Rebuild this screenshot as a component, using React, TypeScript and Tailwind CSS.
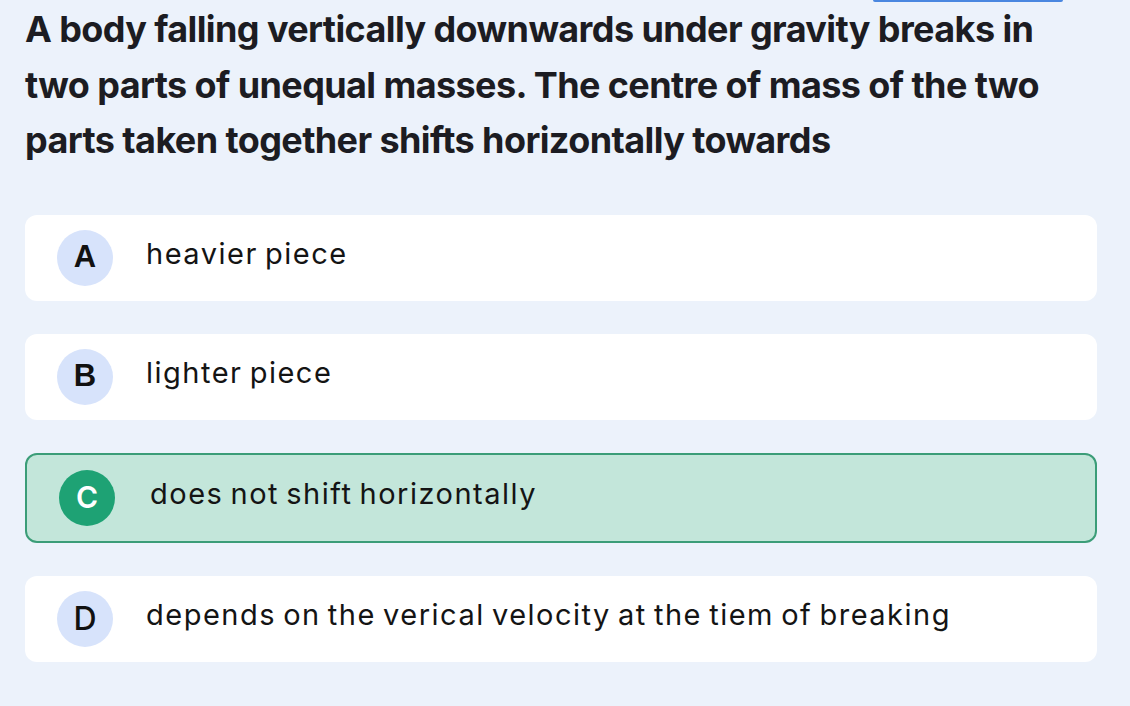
import React from "react";

interface OptionProps {
  letter: string;
  text: string;
  correct?: boolean;
  badgeFont: string;
}

const Option = ({ letter, text, correct, badgeFont }: OptionProps) => {
  const box = correct
    ? "h-[90px] border-2 border-[#3b9d78] bg-[#c3e6da] pl-[32px]"
    : "h-[86px] bg-white pl-[32px]";
  const badge = correct ? "bg-[#1ea274] text-white" : "bg-[#d7e3fb] text-[#111]";
  return (
    <div className={`flex items-center rounded-[12px] ${box}`}>
      <div className={`flex h-[56px] w-[56px] shrink-0 items-center justify-center rounded-full ${badge} ${badgeFont}`}>
        {letter}
      </div>
      <span
        className={`mb-2 text-[29px] leading-[29px] tracking-[1.5px] [word-spacing:-2.5px] text-[#141414] ${
          correct ? "ml-[35px]" : "ml-[33px]"
        }`}
      >
        {text}
      </span>
    </div>
  );
};

const options = [
  { letter: "A", text: "heavier piece", badgeFont: "font-['Liberation_Sans'] text-[31px] font-bold" },
  { letter: "B", text: "lighter piece", badgeFont: "font-['Liberation_Sans'] text-[31px] font-bold" },
  {
    letter: "C",
    text: "does not shift horizontally",
    correct: true,
    badgeFont: "font-['Inter'] text-[30px] font-semibold",
  },
  {
    letter: "D",
    text: "depends on the verical velocity at the tiem of breaking",
    badgeFont: "font-['Inter'] text-[32px] font-medium",
  },
];

export default function App() {
  return (
    <div className="h-[706px] w-[1130px] overflow-hidden bg-[#ecf2fb] font-['Inter',sans-serif]">
      <div className="ml-[873px] h-[2px] w-[190px] rounded-b-full bg-[#4a87e0]" />
      <div className="pl-[25px] pr-[33px]">
        <h1 className="text-[36px] font-bold leading-[55.5px] tracking-[-0.6px] text-[#1c1c22]">
          A body falling vertically downwards under gravity breaks in two parts of unequal masses. The centre of
          mass of the two parts taken together shifts horizontally towards
        </h1>
        <div className="mt-[46px] flex flex-col gap-[33px]">
          {options.map((o) => (
            <Option key={o.letter} {...o} />
          ))}
        </div>
      </div>
    </div>
  );
}
